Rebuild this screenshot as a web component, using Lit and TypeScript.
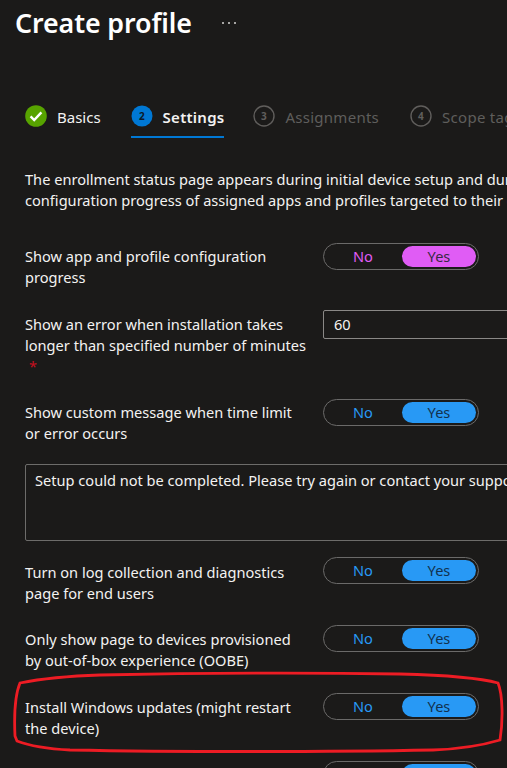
import { LitElement, html, css } from "lit";
import { customElement } from "lit/decorators.js";

@customElement("app-root")
export class AppRoot extends LitElement {
  static styles = css`
    :host {
      display: block;
      width: 507px;
      height: 768px;
      overflow: hidden;
      position: relative;
      background: #1b1a19;
      color: #f3f2f1;
      font-family: "Noto Sans", "Open Sans", sans-serif;
      font-size: 14.6px;
      line-height: 21px;
    }
    .page { width: 760px; display: flex; flex-direction: column; }
    .head { display: flex; align-items: center; height: 46px; padding-left: 15px; }
    h1 { margin: 0; font-size: 26.8px; line-height: 46px; font-weight: 600; color: #fff; letter-spacing: -0.1px; }
    .more { margin-left: 30px; display: flex; gap: 4px; }
    .more i { width: 2px; height: 2px; border-radius: 50%; background: #d6d4d2; }
    .tabs { display: flex; margin: 59px 0 0 25px; height: 33px; font-size: 15px; }
    .tab { display: flex; gap: 10px; align-items: flex-start; height: 32px; color: #f3f2f1; box-sizing: border-box; }
    .t1 { margin-right: 30px; }
    .tab.sel { border-bottom: 2px solid #0078d4; height: 33px; font-weight: 600; margin-right: 29px; letter-spacing: 0.25px; }
    .t3 { margin-right: 31px; }
    .tab.off { color: #5f5e5c; letter-spacing: 0.27px; }
    .tab span { line-height: 24px; }
    .tab svg { width: 22px; height: 22px; flex: none; }
    .intro { margin: 0 0 0 25px; padding-top: 31px; white-space: nowrap; height: 42px; }
    .rows { display: flex; flex-direction: column; margin: 32px 0 0 25px; }
    .row { display: grid; grid-template-columns: 298px 1fr; margin-bottom: 22px; }
    .label { padding-top: 4px; width: 285px; }
    .row.first .label, .row.tight .label { padding-top: 3px; }
    .row.tight { margin-bottom: 20px; }
    .row.low { margin-bottom: 21px; }
    .row.low .label { padding-top: 5px; }
    .star { display: block; color: #c50f1f; padding-left: 4px; line-height: 21px; }
    .input {
      box-sizing: border-box; width: 400px; height: 29px; border: 1px solid #8a8886;
      border-radius: 2px; padding-left: 10px; line-height: 26px;
    }
    .textarea {
      box-sizing: border-box; width: 700px; height: 77px; border: 1px solid #6d6c6a;
      border-radius: 2px; padding: 5px 9px; margin-bottom: 16px; white-space: nowrap;
    }
    .toggle {
      box-sizing: border-box; width: 156px; height: 27px; border: 1px solid #6b6a69;
      border-radius: 14px; display: grid; grid-template-columns: 76px 74px; align-items: center;
      padding: 2px; text-align: center; line-height: 21px;
      --c: #2899f5;
    }
    .toggle.pink { --c: #e05cf5; }
    .toggle .no { color: var(--c); padding-right: 2px; }
    .toggle .yes { background: var(--c); color: #3a2a44; border-radius: 11px; height: 21px; }
    .toggle:not(.pink) .yes { color: #12324e; }
    .ring { position: absolute; left: 0; top: 0; width: 507px; height: 768px; pointer-events: none; }
  `;

  private toggle(pink = false) {
    return html`<div class="toggle ${pink ? "pink" : ""}"><span class="no">No</span><span class="yes">Yes</span></div>`;
  }

  private num(n: string, color: string, fill: string, txt: string) {
    return html`<svg viewBox="0 0 22 22">
      <circle cx="11" cy="11" r="${fill === "none" ? 10 : 10.5}" fill="${fill}" stroke="${color}" stroke-width="${fill === "none" ? 1.4 : 0}"></circle>
      <text x="11" y="14.5" text-anchor="middle" font-size="10" font-weight="700" fill="${txt}" font-family="Noto Sans, sans-serif">${n}</text>
    </svg>`;
  }

  render() {
    return html`
      <div class="page">
        <div class="head">
          <h1>Create profile</h1>
          <div class="more"><i></i><i></i><i></i></div>
        </div>
        <div class="tabs">
          <div class="tab t1">
            <svg viewBox="0 0 22 22">
              <circle cx="11" cy="11" r="10.8" fill="#57a300"></circle>
              <path d="M5.6 11.4l3.6 3.6 7.2-7.6" fill="none" stroke="#fff" stroke-width="2.4"></path>
            </svg>
            <span>Basics</span>
          </div>
          <div class="tab sel">
            ${this.num("2", "#0078d4", "#0078d4", "#0b1b2b")}
            <span>Settings</span>
          </div>
          <div class="tab off t3">
            ${this.num("3", "#605e5c", "none", "#605e5c")}
            <span>Assignments</span>
          </div>
          <div class="tab off">
            ${this.num("4", "#605e5c", "none", "#605e5c")}
            <span>Scope tags</span>
          </div>
        </div>
        <div class="intro">
          The enrollment status page appears during initial device setup and during first user sign in. If enabled, users can see the<br />
          configuration progress of assigned apps and profiles targeted to their device.
        </div>
        <div class="rows">
          <div class="row first">
            <div class="label">Show app and profile configuration progress</div>
            ${this.toggle(true)}
          </div>
          <div class="row">
            <div class="label">Show an error when installation takes longer than specified number of minutes<span class="star">*</span></div>
            <div class="input">60</div>
          </div>
          <div class="row tight">
            <div class="label">Show custom message when time limit or error occurs</div>
            ${this.toggle()}
          </div>
          <div class="textarea">Setup could not be completed. Please try again or contact your support person for help.</div>
          <div class="row low">
            <div class="label">Turn on log collection and diagnostics page for end users</div>
            ${this.toggle()}
          </div>
          <div class="row">
            <div class="label">Only show page to devices provisioned by out-of-box experience (OOBE)</div>
            ${this.toggle()}
          </div>
          <div class="row">
            <div class="label">Install Windows updates (might restart the device)</div>
            ${this.toggle()}
          </div>
          <div class="row">
            <div class="label"></div>
            ${this.toggle()}
          </div>
        </div>
      </div>
      <svg class="ring" viewBox="0 0 507 768">
        <path d="M15 736 C14 715 15 695 20 683 C45 678 70 676 100 675 C200 673 330 673 400 674 C440 675 480 678 498 683 C503 695 503 722 500 740 C480 746 460 749 433 750 C330 752 170 752 70 750 C50 749 30 746 17 741 Z"
          fill="none" stroke="#ed1c24" stroke-width="2.8"></path>
      </svg>
    `;
  }
}
